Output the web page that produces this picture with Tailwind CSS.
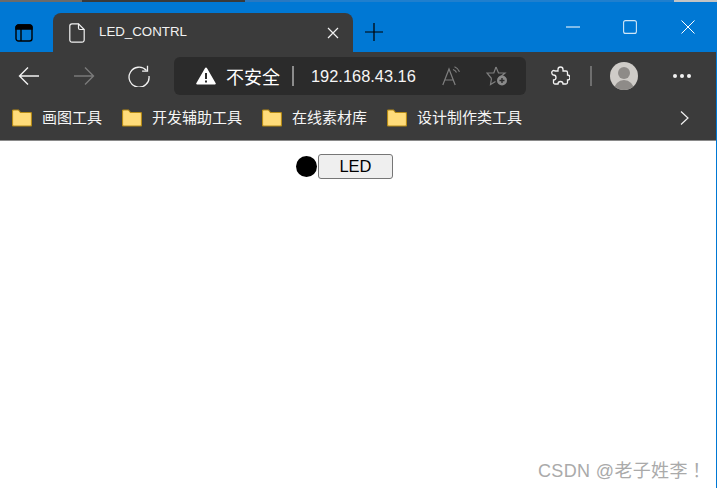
<!DOCTYPE html>
<html lang="en">
<head>
    <meta charset="UTF-8">
    <meta name="viewport" content="width=device-width, initial-scale=1.0">
    <title>LED_CONTRL</title>
    <script src="https://cdn.jsdelivr.net/npm/@tailwindcss/browser@4"></script>
</head>
<body class="relative h-[488px] w-[717px] overflow-hidden bg-white font-['Liberation_Sans','Noto_Sans_CJK_SC',sans-serif]">
    <div class="flex h-[2px] bg-[#0078d4]">
        <div class="h-full w-[82px] bg-[#6b6b6b]"></div>
        <div class="h-full w-[163px] bg-[#3a3a3a]"></div>
        <div class="h-full w-[45px] bg-[#2a78c0]"></div>
        <div class="h-full w-[384px] bg-[#1f7fce]"></div>
        <div class="h-full flex-1 bg-[#c4c4c4]"></div>
    </div>

    <!-- title bar -->
    <div class="flex h-[50px] bg-[#0078d4] pr-px">
        <div class="flex w-[53px] items-center justify-center pt-[12px] pr-[5px]">
            <svg width="18" height="18" viewBox="0 0 18 18" fill="none" stroke="#000" stroke-width="1.4">
                <rect x="1" y="1" width="16" height="16" rx="2.5" />
                <path d="M1 3.500a2.500 2.500 0 0 1 2.500-2.500h11a2.500 2.500 0 0 1 2.500 2.500V5H1z" fill="#000" />
                <path d="M6 5v12" />
            </svg>
        </div>
        <div class="mt-[11px] flex h-[39px] w-[300px] items-center rounded-t-lg bg-[#3b3b3b] pl-[16px] pr-[14px]">
            <svg width="16" height="20" viewBox="0 0 16 20" fill="none" stroke="#f2f2f2" stroke-width="1.2">
                <path d="M3 .8h6.500l5.700 5.700V17a2.200 2.200 0 0 1-2.200 2.200H3A2.200 2.200 0 0 1 .8 17V3A2.200 2.200 0 0 1 3 .8z" />
                <path d="M9.500 .8V5a1.500 1.500 0 0 0 1.500 1.500h4.200" />
            </svg>
            <span class="ml-[14px] pb-px text-[13.3px] text-[#f2f2f2]">LED_CONTRL</span>
            <svg class="ml-auto" width="12" height="12" viewBox="0 0 12 12" stroke="#f2f2f2" stroke-width="1.2">
                <path d="M1 1l10 10M11 1L1 11" />
            </svg>
        </div>
        <div class="flex w-[42px] items-center justify-center pt-[10px]">
            <svg width="18" height="18" viewBox="0 0 18 18" stroke="#000" stroke-width="1.2">
                <path d="M0 9h18M9 0v18" />
            </svg>
        </div>
        <div class="ml-auto flex items-center pb-[1px]">
            <div class="flex w-[57px] justify-center">
                <svg width="14" height="2" viewBox="0 0 14 2" stroke="#fff" stroke-width="1"><path d="M0 1h14" /></svg>
            </div>
            <div class="flex w-[58px] justify-center">
                <svg width="14" height="14" viewBox="0 0 14 14" fill="none" stroke="#cfe6f7" stroke-width="1.1"><rect x=".6" y=".6" width="12.8" height="12.8" rx="2" /></svg>
            </div>
            <div class="flex w-[57px] justify-center">
                <svg width="14" height="14" viewBox="0 0 14 14" stroke="#fff" stroke-width="1"><path d="M.5 .5l13 13M13.500 .5l-13 13" /></svg>
            </div>
        </div>
    </div>

    <!-- toolbar -->
    <div class="flex h-[46px] items-center bg-[#3b3b3b] pt-[2px] pr-px">
        <div class="flex h-[38px] w-[174px] items-center">
            <svg class="ml-[18px]" width="22" height="20" viewBox="0 0 22 20" fill="none" stroke="#f2f2f2" stroke-width="1.4">
                <path d="M21 10H1.500M10 1.500L1.500 10l8.500 8.500" />
            </svg>
            <svg class="ml-[33px]" width="22" height="20" viewBox="0 0 22 20" fill="none" stroke="#7a7a7a" stroke-width="1.4">
                <path d="M1 10h19.500M12 1.500l8.500 8.500-8.500 8.500" />
            </svg>
            <svg class="ml-[33px]" width="22" height="22" viewBox="0 0 22 22" fill="none" stroke="#f2f2f2" stroke-width="1.300">
                <path d="M18.500 5.500A10 10 0 1 0 21 11" />
                <path d="M19.500 .8v5.400h-5.400" />
            </svg>
        </div>
        <div class="flex h-[38px] w-[352px] items-center rounded-md bg-[#2b2b2b] pl-[22px] pr-[18px]">
            <svg width="20" height="18" viewBox="0 0 20 18">
                <path d="M10 .5a1 1 0 0 1 .9.5l8.800 15.300a.8.8 0 0 1-.7 1.200H1a.8.8 0 0 1-.7-1.200L9.100 1a1 1 0 0 1 .9-.5z" fill="#fff" />
                <path d="M9 6h2v6H9zM9 13.500h2v2H9z" fill="#2b2b2b" />
            </svg>
            <span class="ml-[10px] text-[18px] leading-none text-white font-['Noto_Sans_CJK_SC',sans-serif]">不安全</span>
            <div class="ml-[12px] h-[20px] w-[2px] bg-[#8c8c8c]"></div>
            <span class="ml-[17px] text-[16.4px] text-[#f5f5f5]">192.168.43.16</span>
            <svg class="ml-auto" width="20" height="20" viewBox="0 0 20 20" fill="none" stroke="#7f7f7f" stroke-width="1.200">
                <path d="M.8 19L7 3l6.200 16M3 14h8" />
                <path d="M11 3.500a6 6 0 0 1 3.500 3M12.500 .8a9 9 0 0 1 5 5" />
            </svg>
            <svg class="ml-[24px]" width="22" height="20" viewBox="0 0 22 20" fill="none" stroke="#7f7f7f" stroke-width="1.200">
                <path d="M10 1l2.500 6h6.500l-5 4.200 1 3M5.500 12.500L4.500 18.500 9.500 15.500M5.500 12.500L1 7h6.800L10 1" />
                <circle cx="16" cy="14.500" r="5" fill="#8a8a8a" stroke="none" />
                <path d="M13.500 14.500h5M16 12v5" stroke="#2b2b2b" stroke-width="1.400" />
            </svg>
        </div>
        <svg class="ml-[25px]" width="19" height="20" viewBox="0 0 19 20" fill="none" stroke="#f2f2f2" stroke-width="1.300">
            <path d="M7 3.500a2.500 2.500 0 0 1 5 0V5h3a1.500 1.500 0 0 1 1.500 1.500V9a2.500 2.500 0 0 1 0 5v2.500A1.500 1.500 0 0 1 15 18h-3a2.500 2.500 0 0 0-5 0H4a1.500 1.500 0 0 1-1.500-1.500V14a2.500 2.500 0 0 0 0-5 1.500 1.500 0 0 1-1.500-1.500A2 2 0 0 1 4 5h3z" />
        </svg>
        <div class="ml-[20px] h-[20px] w-[2px] bg-[#6f6f6f]"></div>
        <div class="relative ml-[18px] h-[28px] w-[28px] overflow-hidden rounded-full bg-[#cfccc8]">
            <div class="absolute left-[8px] top-[5px] h-[12px] w-[12px] rounded-full bg-[#8e8b88]"></div>
            <div class="absolute left-[4px] top-[18px] h-[14px] w-[20px] rounded-t-full bg-[#8e8b88]"></div>
        </div>
        <div class="ml-[35px] flex gap-[3px]">
            <div class="h-[4px] w-[4px] rounded-full bg-[#f2f2f2]"></div>
            <div class="h-[4px] w-[4px] rounded-full bg-[#f2f2f2]"></div>
            <div class="h-[4px] w-[4px] rounded-full bg-[#f2f2f2]"></div>
        </div>
    </div>

    <!-- bookmarks -->
    <div class="flex h-[43px] items-center border-b border-[#8a8a8a] bg-[#3b3b3b] pb-[3px] text-[15px] text-[#f5f5f5] font-['Noto_Sans_CJK_SC',sans-serif]">
        <svg class="ml-[12px]" width="20" height="18" viewBox="0 0 20 18">
            <path d="M1.500 1h5l2 2.500h10a1 1 0 0 1 1 1V16a1 1 0 0 1-1 1h-17a1 1 0 0 1-1-1V2a1 1 0 0 1 1-1z" fill="#ffdc7a" stroke="#b58a16" stroke-width="1.200" />
        </svg>
        <span class="ml-[10px]">画图工具</span>
        <svg class="ml-[20px]" width="20" height="18" viewBox="0 0 20 18">
            <path d="M1.500 1h5l2 2.500h10a1 1 0 0 1 1 1V16a1 1 0 0 1-1 1h-17a1 1 0 0 1-1-1V2a1 1 0 0 1 1-1z" fill="#ffdc7a" stroke="#b58a16" stroke-width="1.200" />
        </svg>
        <span class="ml-[10px]">开发辅助工具</span>
        <svg class="ml-[20px]" width="20" height="18" viewBox="0 0 20 18">
            <path d="M1.500 1h5l2 2.500h10a1 1 0 0 1 1 1V16a1 1 0 0 1-1 1h-17a1 1 0 0 1-1-1V2a1 1 0 0 1 1-1z" fill="#ffdc7a" stroke="#b58a16" stroke-width="1.200" />
        </svg>
        <span class="ml-[10px]">在线素材库</span>
        <svg class="ml-[20px]" width="20" height="18" viewBox="0 0 20 18">
            <path d="M1.500 1h5l2 2.500h10a1 1 0 0 1 1 1V16a1 1 0 0 1-1 1h-17a1 1 0 0 1-1-1V2a1 1 0 0 1 1-1z" fill="#ffdc7a" stroke="#b58a16" stroke-width="1.200" />
        </svg>
        <span class="ml-[10px]">设计制作类工具</span>
        <svg class="ml-auto mr-[28px]" width="9" height="14" viewBox="0 0 9 14" fill="none" stroke="#f2f2f2" stroke-width="1.200">
            <path d="M1 .5L8 7l-7 6.500" />
        </svg>
    </div>

    <!-- page -->
    <div class="flex items-center pl-[296px] pt-[13px]">
        <div class="h-[21px] w-[21px] rounded-full bg-black"></div>
        <button class="ml-px h-[25px] w-[75px] rounded-[3px] border border-[#767676] bg-[#efefef] text-[16.5px] leading-none text-black">LED</button>
    </div>

    <div class="absolute bottom-0 right-0 top-[52px] w-px bg-[#0078d4]"></div>
    <div class="absolute bottom-[8px] left-[538px] whitespace-nowrap text-[18px] leading-none tracking-[0.35px] text-[#aaaaaa]">CSDN @老子姓李<span class="font-['Noto_Sans_CJK_TC',sans-serif]">！</span></div>
</body>
</html>
